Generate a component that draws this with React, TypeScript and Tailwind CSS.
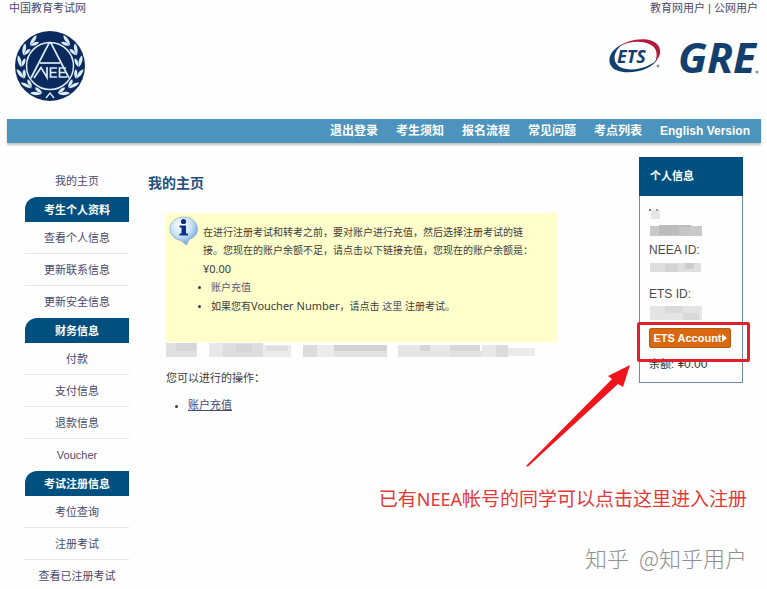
import clsx from "clsx";
import type { ReactNode } from "react";

const navItems = ["退出登录", "考生须知", "报名流程", "常见问题", "考点列表"];

const menu = [
  { title: "考生个人资料", items: ["查看个人信息", "更新联系信息", "更新安全信息"] },
  { title: "财务信息", items: ["付款", "支付信息", "退款信息", "Voucher"] },
  { title: "考试注册信息", items: ["考位查询", "注册考试", "查看已注册考试"] },
];

// [x, y, width, height, fill]
type Block = [number, number, number, number, string];

const contentBlocks: Block[] = [
  [0, 1, 31, 14, "#e0e0e0"],
  [10, 1, 20, 8, "#d6d6d6"],
  [43, 1, 14, 14, "#e8e8e8"],
  [57, 1, 40, 14, "#dddddd"],
  [70, 2, 16, 8, "#d7d7d7"],
  [97, 3, 28, 12, "#ebebeb"],
  [100, 4, 22, 5, "#dedede"],
  [137, 3, 14, 12, "#dcdcdc"],
  [151, 3, 17, 12, "#ececec"],
  [168, 3, 53, 6, "#d3d3d3"],
  [168, 9, 53, 6, "#e2e2e2"],
  [232, 3, 22, 12, "#e6e6e6"],
  [254, 3, 10, 6, "#d5d5d5"],
  [254, 9, 30, 6, "#e6e6e6"],
  [264, 3, 20, 6, "#e8e8e8"],
  [284, 3, 30, 6, "#d8d8d8"],
  [284, 9, 32, 6, "#e2e2e2"],
  [316, 3, 14, 12, "#e9e9e9"],
  [330, 3, 12, 12, "#dcdcdc"],
  [342, 6, 27, 8, "#ebebeb"],
];

function Mosaic({ blocks, className }: { blocks: Block[]; className?: string }) {
  return (
    <svg className={clsx("block", className)} aria-hidden="true">
      {blocks.map(([x, y, width, height, fill], i) => (
        <rect key={i} x={x} y={y} width={width} height={height} fill={fill} />
      ))}
    </svg>
  );
}

function NeeaLogo() {
  const leaves = [34, 58, 82, 106, 130, 154];
  return (
    <svg viewBox="0 0 72 72" className="size-[72px]" role="img" aria-label="NEEA">
      <circle cx="36" cy="36" r="35" fill="#0a2a5e" />
      {[1, -1].map((side) => (
        <g key={side} transform={side === 1 ? undefined : "translate(72 0) scale(-1 1)"}>
          {leaves.map((angle) => (
            <g key={angle} transform={`rotate(${angle} 36 36) translate(36 6.5)`} fill="#dcecf8">
              <path d="M-6 -3.500C-3 -4.500 2 -3 5 1C0 1 -4 0 -6 -3.500Z" />
              <path d="M-4 4C-3 1 1 0.500 5 1.500C2 4.500 -1 5 -4 4Z" />
            </g>
          ))}
        </g>
      ))}
      <circle cx="36" cy="36" r="23.500" fill="#0a2a5e" stroke="#dcecf8" strokeWidth="1.500" />
      <g fill="none" stroke="#dcecf8" strokeWidth="1.700">
        <path d="M17 48L35 13H37L55 48" />
        <path d="M26 33H46" />
        <path d="M20 48L27 37.500L33 47.500V37" />
        <path d="M43 38H36.500V47H43M37 42.500H42.500" />
        <path d="M52 38H45.500V47H53M46 42.500H51.500" />
      </g>
      <path d="M32 68L36 63L40 68" fill="none" stroke="#dcecf8" strokeWidth="1.400" />
    </svg>
  );
}

function EtsLogo() {
  return (
    <svg viewBox="0 0 52 38" className="h-[38px] w-[52px]" role="img" aria-label="ETS">
      <path
        d="M14 6C-1 12 -4 27 7 32C20 38 44 32 49 20C43 29 25 34 13 30C3 26 3 14 14 6Z"
        fill="#123f6e"
      />
      <path d="M9 9C20 0 42 -2 49 7C53 13 51 19 46 24C49 17 48 10 42 7C33 2 20 3 9 9Z" fill="#b01c3c" />
      <text
        x="8"
        y="25"
        fill="#123f6e"
        className="font-['Noto_Sans',sans-serif] text-[18px] font-bold italic"
      >
        ETS
      </text>
      <circle cx="49" cy="28" r="1.500" fill="#8793a3" />
    </svg>
  );
}

function GreLogo() {
  return (
    <svg viewBox="0 0 88 56" className="h-14 w-[88px] overflow-visible" role="img" aria-label="GRE">
      <text
        x="1"
        y="35"
        fill="#123f6e"
        className="font-['Noto_Sans',sans-serif] text-[42px] leading-none font-bold italic"
      >
        GRE
      </text>
      <circle cx="80" cy="34" r="1.500" fill="#8793a3" />
    </svg>
  );
}

function InfoIcon() {
  return (
    <svg viewBox="0 0 30 30" className="size-[30px] shrink-0" aria-hidden="true">
      <defs>
        <radialGradient id="bubble" cx="0.4" cy="0.3" r="0.75">
          <stop offset="0" stopColor="#ffffff" />
          <stop offset="0.5" stopColor="#cde4f7" />
          <stop offset="1" stopColor="#5b9bd3" />
        </radialGradient>
      </defs>
      <path
        d="M15 1C22.500 1 28.500 6 28.500 13C28.500 18 25 22 20 23.500L17.500 29L12 24.500C6 23.500 1 19 1 13C1 6 7 1 15 1Z"
        fill="url(#bubble)"
        stroke="#8fb0cf"
        strokeWidth="0.800"
      />
      <circle cx="14.500" cy="5.500" r="2.600" fill="#0d2f86" />
      <path d="M10.500 9.500H17V17.500H19V19.500H10.500V17.500H12.500V11.500H10.500Z" fill="#0d2f86" />
    </svg>
  );
}

function MenuLink({ children, last }: { children: ReactNode; last?: boolean }) {
  return (
    <a
      href="#"
      className={clsx(
        "flex h-8 items-center justify-center border-b pt-0.5",
        last ? "border-transparent" : "border-[#e4e4ea]",
      )}
    >
      {children}
    </a>
  );
}

function Sidebar() {
  return (
    <nav className="w-[104px] shrink-0 text-[11px] text-[#4a4a6c]">
      <MenuLink last>我的主页</MenuLink>
      {menu.map((group) => (
        <section key={group.title}>
          <h2 className="flex h-[25px] items-center justify-center rounded-tl-xl bg-[#00507f] pt-0.5 font-bold text-white">
            {group.title}
          </h2>
          {group.items.map((item, i) => (
            <MenuLink key={item} last={i === group.items.length - 1}>
              {item}
            </MenuLink>
          ))}
        </section>
      ))}
    </nav>
  );
}

function Content() {
  return (
    <main className="min-w-0 flex-1 text-[11px] text-[#3c3c3c]">
      <h1 className="text-sm leading-9 font-bold text-[#24507f]">我的主页</h1>
      <div className="mt-3 mr-[82px] ml-[18px]">
        <div className="flex h-[129px] bg-[#ffffcc] pt-[3px] pl-[3px]">
          <InfoIcon />
          <div className="pt-2 pl-1 text-[10px] leading-[18px]">
            <p>
              在进行注册考试和转考之前，要对账户进行充值，然后选择注册考试的链
              <br />
              接。您现在的账户余额不足，请点击以下链接充值，您现在的账户余额是：
              <br />
              <span className="font-['Noto_Sans',sans-serif] text-[11px]">¥0.00</span>
            </p>
            <ul className="list-disc pl-2">
              <li>
                <a href="#" className="text-[#55557a]">账户充值</a>
              </li>
              <li>
                如果您有<span className="font-['Noto_Sans',sans-serif] text-[11px]">Voucher Number</span>，请点击{" "}
                <a href="#" className="text-[#55557a]">这里</a> 注册考试。
              </li>
            </ul>
          </div>
        </div>
        <Mosaic blocks={contentBlocks} className="h-[18px] w-full" />
        <p className="mt-2 leading-5">您可以进行的操作：</p>
        <ul className="mt-2 list-disc pl-[22px] leading-[18px]">
          <li>
            <a href="#" className="text-[#4a4a78] underline">账户充值</a>
          </li>
        </ul>
      </div>
    </main>
  );
}

function Profile() {
  return (
    <aside className="relative mt-[-8px] h-[226px] w-[104px] shrink-0 border border-[#6d8ba6] text-xs text-[#4c4c4c]">
      <h2 className="-mx-px -mt-px flex h-[39px] items-center bg-[#00507f] pl-[11px] text-[11px] font-bold text-white">
        个人信息
      </h2>
      <div className="pt-3 pl-[9px]">
        <Mosaic
          className="h-8 w-16"
          blocks={[
            [2, 2, 9, 9, "#e6e6e6"],
            [0, 1, 2, 2, "#777777"],
            [7, 1, 2, 2, "#999999"],
            [1, 18, 52, 10, "#c9c9c9"],
            [10, 17, 32, 10, "#bcbcbc"],
            [30, 19, 12, 8, "#c6c6c6"],
          ]}
        />
        <p className="leading-5">NEEA ID:</p>
        <Mosaic
          className="h-6 w-16"
          blocks={[
            [1, 3, 51, 9, "#dedede"],
            [16, 4, 12, 8, "#d3d3d3"],
            [36, 3, 9, 6, "#cccccc"],
          ]}
        />
        <p className="leading-5">ETS ID:</p>
        <Mosaic
          className="h-6 w-16"
          blocks={[
            [1, 2, 52, 14, "#e4e4e4"],
            [16, 2, 18, 7, "#dadada"],
            [34, 9, 16, 7, "#d8d8d8"],
          ]}
        />
        <div className="relative w-[82px]">
          <button
            type="button"
            className="flex h-5 w-full items-center justify-center rounded-xs border border-[#b9590d] bg-[#da680e] text-[11px] font-bold text-white"
          >
            ETS Account
            <svg viewBox="0 0 5 8" className="h-2 w-[5px]" aria-hidden="true">
              <path d="M0 0L5 4L0 8Z" fill="white" />
            </svg>
          </button>
          <div className="absolute -top-[6px] -left-3 h-10 w-[113px] rounded-xs border-[3px] border-[#e0202a]" />
        </div>
        <p className="mt-[6px] leading-5 text-[#333333]">
          <span className="text-[11px]">余额:</span> ¥0.00
        </p>
      </div>
      <svg viewBox="0 0 106 104" className="absolute top-[206px] -left-[114px] h-[104px] w-[106px]" aria-hidden="true">
        <path d="M0 102L86 15L82 12L104 1L97 23L92 20L2 102.500Z" fill="#f0141c" />
      </svg>
      <p className="absolute top-[327px] -right-[5px] text-[19px] leading-7 whitespace-nowrap text-[#e23a3a]">
        已有<span className="font-['Noto_Sans',sans-serif] text-lg">NEEA</span>帐号的同学可以点击这里进入注册
      </p>
    </aside>
  );
}

export default function App() {
  return (
    <div className="relative h-screen overflow-hidden bg-[#fefefe] font-['Liberation_Sans','Noto_Sans_CJK_SC',sans-serif]">
      <header>
        <div className="flex h-4 items-center justify-between px-[9px] text-[11px] text-[#4a4a6c]">
          <a href="#">中国教育考试网</a>
          <div>
            <a href="#">教育网用户</a> | <a href="#">公网用户</a>
          </div>
        </div>
        <div className="flex h-[103px] items-start justify-between pt-[14px] pr-[2px] pl-[14px]">
          <NeeaLogo />
          <div className="flex gap-4 pt-2">
            <EtsLogo />
            <GreLogo />
          </div>
        </div>
        <nav className="mr-[6px] ml-[7px] flex h-6 items-center justify-end gap-[18px] bg-[#4c94bd] pr-[11px] text-xs font-bold text-white shadow-[0_2px_2px_#c4c4c4]">
          {navItems.map((item) => (
            <a key={item} href="#">{item}</a>
          ))}
          <a href="#">English Version</a>
        </nav>
      </header>
      <div className="flex pt-[22px] pr-6 pl-[25px]">
        <Sidebar />
        <div className="w-[19px] shrink-0" />
        <Content />
        <Profile />
      </div>
      <div className="absolute right-5 bottom-4 flex gap-[10px] font-['Noto_Sans_CJK_SC',sans-serif] text-[22px] leading-8 font-light text-[#8f8f8f]">
        <span>知乎</span>
        <span>@知乎用户</span>
      </div>
    </div>
  );
}
